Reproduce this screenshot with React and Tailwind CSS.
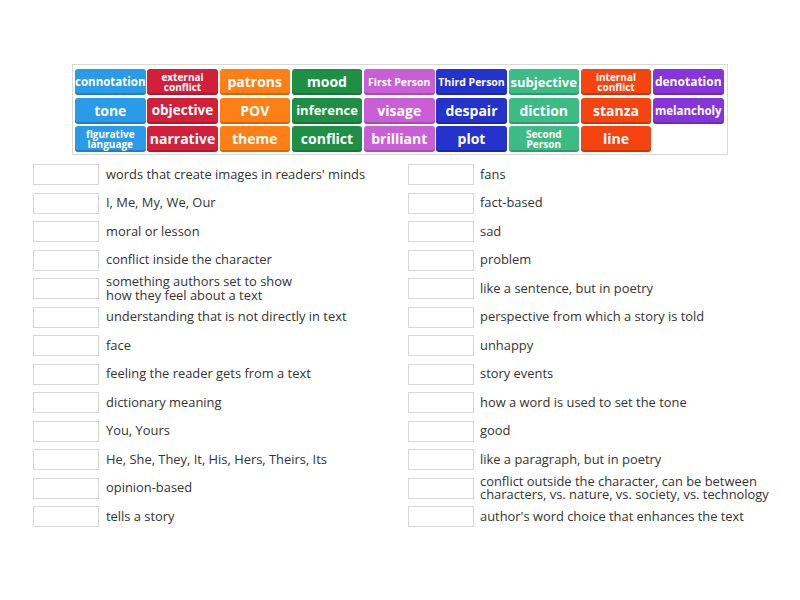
const COLORS = [
  "bg-[#2a9be8]",
  "bg-[#d3203a]",
  "bg-[#fd7f15]",
  "bg-[#1f8f46]",
  "bg-[#c95fd6]",
  "bg-[#2333cc]",
  "bg-[#3dbb85]",
  "bg-[#f5440f]",
  "bg-[#8535d9]",
];

const tiles = [
  ["connotation", "text-[11.5px]"],
  ["external conflict", "small"],
  ["patrons", "text-[14px]"],
  ["mood", "text-[14px]"],
  ["First Person", "text-[10.5px]"],
  ["Third Person", "text-[10.5px]"],
  ["subjective", "text-[13px]"],
  ["internal conflict", "small"],
  ["denotation", "text-[12px]"],
  ["tone", "text-[14px]"],
  ["objective", "text-[13.5px]"],
  ["POV", "text-[14px]"],
  ["inference", "text-[13px]"],
  ["visage", "text-[14px]"],
  ["despair", "text-[14px]"],
  ["diction", "text-[14px]"],
  ["stanza", "text-[14px]"],
  ["melancholy", "text-[11.5px]"],
  ["figurative language", "small"],
  ["narrative", "text-[14px]"],
  ["theme", "text-[14px]"],
  ["conflict", "text-[14px]"],
  ["brilliant", "text-[14px]"],
  ["plot", "text-[14px]"],
  ["Second Person", "small"],
  ["line", "text-[14px]"],
];

const leftRows = [
  "words that create images in readers' minds",
  "I, Me, My, We, Our",
  "moral or lesson",
  "conflict inside the character",
  "something authors set to show\nhow they feel about a text",
  "understanding that is not directly in text",
  "face",
  "feeling the reader gets from a text",
  "dictionary meaning",
  "You, Yours",
  "He, She, They, It, His, Hers, Theirs, Its",
  "opinion-based",
  "tells a story",
];

const rightRows = [
  "fans",
  "fact-based",
  "sad",
  "problem",
  "like a sentence, but in poetry",
  "perspective from which a story is told",
  "unhappy",
  "story events",
  "how a word is used to set the tone",
  "good",
  "like a paragraph, but in poetry",
  "conflict outside the character, can be between\ncharacters, vs. nature, vs. society, vs. technology",
  "author's word choice that enhances the text",
];

function Tile({ label, size, color }) {
  const small = size === "small";
  return (
    <div
      className={`${color} flex h-[26px] items-center justify-center rounded-[3px] text-center font-bold text-white shadow-[inset_0_-2px_0_rgba(0,0,0,0.18)] ${
        small ? "text-[10px] leading-[10.5px]" : `${size} leading-none`
      }`}
    >
      {small ? (
        <span className="px-1">{label.replace(" ", "\n")}</span>
      ) : (
        <span className="whitespace-nowrap">{label}</span>
      )}
    </div>
  );
}

function MatchRow({ text, textOffset }) {
  return (
    <div className="flex h-[21px] items-center">
      <div className="h-[21px] w-[66px] shrink-0 border border-[#d6d6d6] bg-white" />
      <p className={`${textOffset} whitespace-pre text-[12.9px] leading-[13.5px] text-[#333]`}>{text}</p>
    </div>
  );
}

export default function App() {
  return (
    <div
      className="h-[600px] w-[800px] bg-white"
      style={{ fontFamily: '"Open Sans", "Liberation Sans", sans-serif' }}
    >
      <div className="pt-[64px] pl-[72px]">
        <div className="w-[656px] border border-[#d9d9d9] bg-white pt-[4px] pr-[2px] pb-[2px] pl-[2px]">
          <div className="grid grid-cols-[repeat(9,70.5px)] gap-x-[1.75px] gap-y-[2.5px] whitespace-pre-line">
            {tiles.map(([label, size], i) => (
              <Tile key={label} label={label} size={size} color={COLORS[i % 9]} />
            ))}
          </div>
        </div>
      </div>

      <div className="mt-[9px] flex">
        <div className="ml-[33px] flex w-[375px] flex-col gap-[7.5px]">
          {leftRows.map((t) => (
            <MatchRow key={t} text={t} textOffset="ml-[7px]" />
          ))}
        </div>
        <div className="flex flex-col gap-[7.5px]">
          {rightRows.map((t) => (
            <MatchRow key={t} text={t} textOffset="ml-[6px]" />
          ))}
        </div>
      </div>
    </div>
  );
}
